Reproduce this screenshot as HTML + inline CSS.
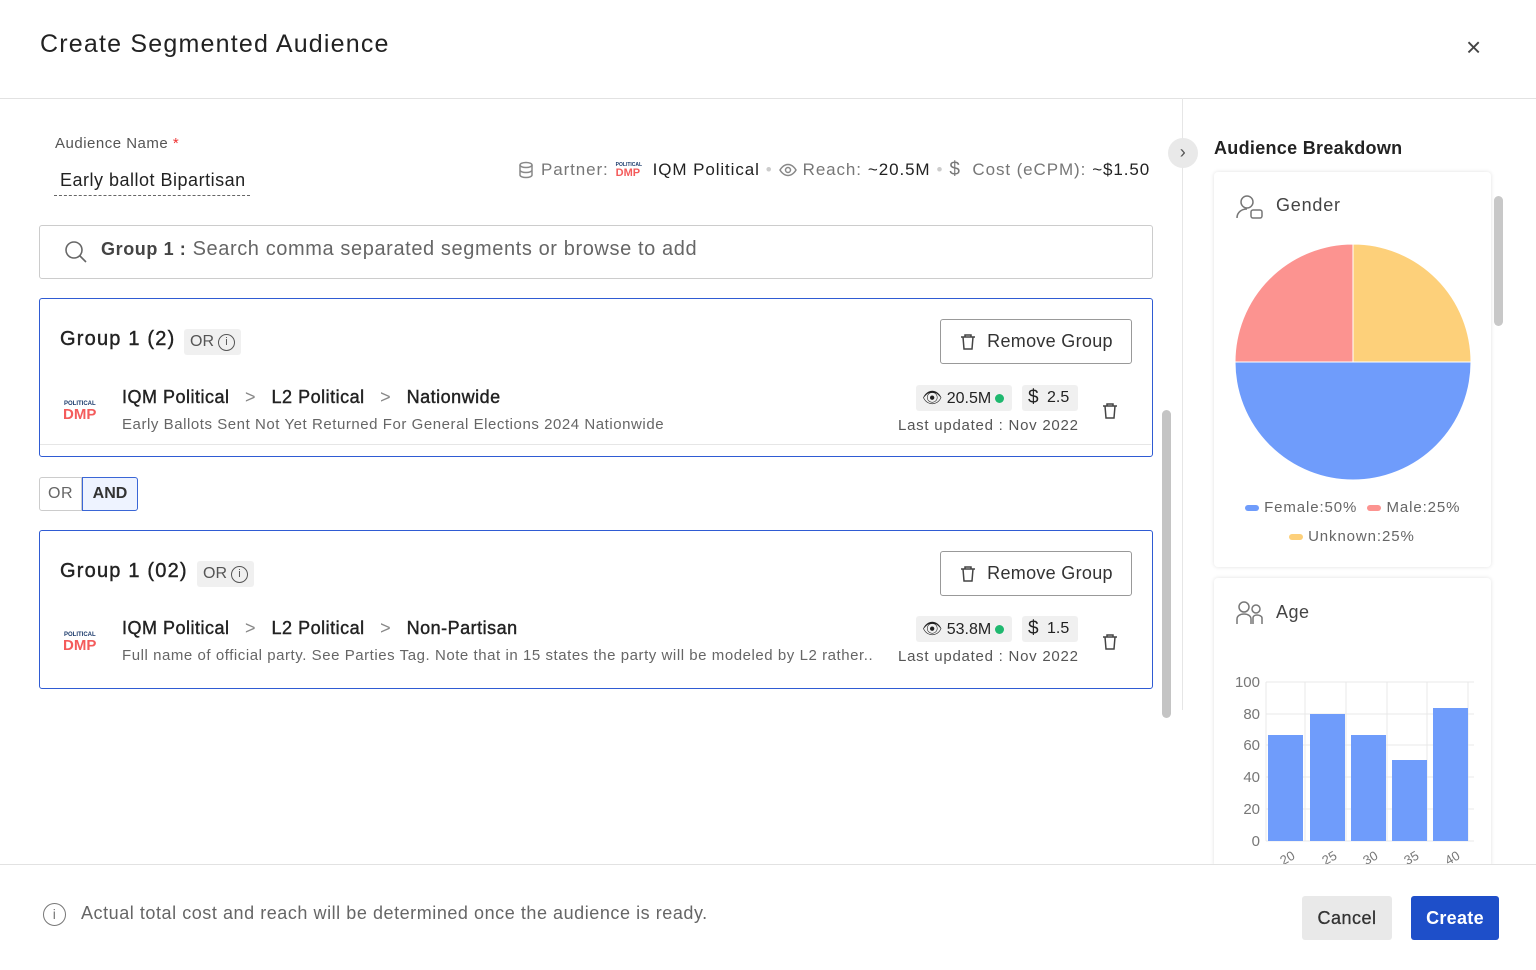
<!DOCTYPE html>
<html><head><meta charset="utf-8"><style>
*{box-sizing:border-box;margin:0;padding:0}
body{width:1536px;height:970px;background:#fff;font-family:"Liberation Sans",sans-serif;color:#222;position:relative;overflow:hidden;letter-spacing:0.5px}
.a{position:absolute;white-space:nowrap}
.grp{position:absolute;left:39px;width:1114px;height:159px;border:1.5px solid #2f5bd3;border-radius:3px;background:#fff}
.rb{position:absolute;left:900px;top:20px;width:192px;height:45px;border:1px solid #999;border-radius:3px;font-size:18px;color:#333;display:flex;align-items:center;justify-content:center;gap:10px;letter-spacing:0.3px}
.dmp{position:absolute;font-weight:bold;line-height:1;letter-spacing:0}
.pill{position:absolute;background:#f0f0f0;border-radius:3px;height:26px;font-size:16px;display:flex;align-items:center;padding:0 6px;gap:4px;letter-spacing:0}
</style></head><body>
<div class="a" style="left:40px;top:30px;font-size:25px;color:#222;letter-spacing:1.2px">Create Segmented Audience</div>
<div class="a" style="left:1466px;top:32px;font-size:26px;color:#444">×</div>
<div class="a" style="left:0;top:98px;width:1536px;height:1px;background:#e2e2e2"></div>
<div class="a" style="left:1182px;top:98px;width:1px;height:612px;background:#e6e6e6"></div>

<div class="a" style="left:55px;top:135px;font-size:15px;color:#555">Audience Name <span style="color:#e33">*</span></div>
<div class="a" style="left:60px;top:170px;font-size:18px;color:#222">Early ballot Bipartisan</div>
<div class="a" style="left:54px;top:195px;width:196px;border-top:1.5px dashed #666"></div>

<div class="a" style="left:517px;top:159px;font-size:17px;color:#777;display:flex;align-items:center;gap:6px;letter-spacing:0.9px">
<svg width="18" height="18" viewBox="0 0 18 18" fill="none" stroke="#888" stroke-width="1.5"><ellipse cx="9" cy="4" rx="6" ry="2.5"/><path d="M3 4v10c0 1.4 2.7 2.5 6 2.5s6-1.1 6-2.5V4M3 9c0 1.4 2.7 2.5 6 2.5s6-1.1 6-2.5"/></svg>
Partner: <span style="display:inline-block;width:32px;position:relative;height:18px"><span class="dmp" style="font-size:5px;color:#1b3a6b;left:1px;top:2px">POLITICAL</span><span class="dmp" style="font-size:11px;color:#f45b5b;left:1px;top:7px">DMP</span></span><span style="color:#222">IQM Political</span> <span style="color:#ccc">•</span>
<svg width="18" height="18" viewBox="0 0 18 18" fill="none" stroke="#888" stroke-width="1.5"><path d="M1 9s3-5.5 8-5.5S17 9 17 9s-3 5.5-8 5.5S1 9 1 9z"/><circle cx="9" cy="9" r="2.5"/></svg>
Reach: <span style="color:#222">~20.5M</span> <span style="color:#ccc">•</span> <span style="font-size:19px">$</span>&nbsp;Cost (eCPM): <span style="color:#222">~$1.50</span></div>

<div class="a" style="left:39px;top:225px;width:1114px;height:54px;border:1px solid #ccc;border-radius:3px"></div>
<svg class="a" style="left:64px;top:240px" width="24" height="24" viewBox="0 0 24 24" fill="none" stroke="#666" stroke-width="1.6"><circle cx="10" cy="10" r="8"/><path d="M16 16l6 6"/></svg>
<div class="a" style="left:101px;top:238px;font-size:20px;color:#666;letter-spacing:0.6px"><b style="color:#444;font-size:18px">Group 1 :</b> Search comma separated segments or browse to add</div>

<div class="grp" style="top:298px">
<div class="a" style="left:20px;top:29px;font-size:20px;color:#222;letter-spacing:1.2px;-webkit-text-stroke:0.4px #222">Group 1 (2)</div>
<div class="pill" style="left:144px;top:30px;color:#555">OR <span style="display:inline-block;width:17px;height:17px;border:1.5px solid #555;border-radius:50%;font-size:11px;text-align:center;line-height:14px">i</span></div>
<div class="rb"><svg width="18" height="18" viewBox="0 0 18 18" fill="none" stroke="#444" stroke-width="1.5"><path d="M2 4h14M6 4V2h6v2M4 4l1 12h8l1-12"/></svg>Remove Group</div>
<span class="dmp" style="font-size:6px;color:#1b3a6b;left:24px;top:102px">POLITICAL</span><span class="dmp" style="font-size:15px;color:#f45b5b;left:23px;top:108px">DMP</span>
<div class="a" style="left:82px;top:88px;font-size:18px;color:#222;letter-spacing:0.5px;-webkit-text-stroke:0.4px #222">IQM Political <span style="color:#888;margin:0 10px;-webkit-text-stroke:0">&gt;</span> L2 Political <span style="color:#888;margin:0 10px;-webkit-text-stroke:0">&gt;</span> Nationwide</div>
<div class="a" style="left:82px;top:117px;font-size:15px;color:#666;letter-spacing:0.55px">Early Ballots Sent Not Yet Returned For General Elections 2024 Nationwide</div>
<div class="pill" style="left:876px;top:86px;width:96px">👁︎ 20.5M <span style="width:9px;height:9px;border-radius:50%;background:#1fb86f;display:inline-block"></span></div>
<div class="pill" style="left:982px;top:86px;width:56px;font-size:16px"><span style="font-size:19px">$</span>&nbsp;2.5</div>
<div class="a" style="left:858px;top:118px;font-size:15px;color:#555;letter-spacing:0.75px">Last updated : Nov 2022</div>
<svg class="a" style="left:1062px;top:103px" width="16" height="18" viewBox="0 0 16 18" fill="none" stroke="#444" stroke-width="1.5"><path d="M1 4h14M5 4V2h6v2M3 4l1 12h8l1-12"/></svg>
<div class="a" style="left:0;top:145px;width:1111px;height:1px;background:#e6e6e6"></div>
</div>

<div class="a" style="left:39px;top:477px;width:43px;height:34px;border:1px solid #ccc;border-radius:3px 0 0 3px;font-size:16px;color:#666;text-align:center;line-height:32px">OR</div>
<div class="a" style="left:82px;top:477px;width:56px;height:34px;border:1.5px solid #3a66d6;border-radius:0 3px 3px 0;background:#eef3ff;font-size:16px;font-weight:bold;color:#333;text-align:center;line-height:31px;letter-spacing:0">AND</div>

<div class="grp" style="top:530px">
<div class="a" style="left:20px;top:29px;font-size:20px;color:#222;letter-spacing:1.2px;-webkit-text-stroke:0.4px #222">Group 1 (02)</div>
<div class="pill" style="left:157px;top:30px;color:#555">OR <span style="display:inline-block;width:17px;height:17px;border:1.5px solid #555;border-radius:50%;font-size:11px;text-align:center;line-height:14px">i</span></div>
<div class="rb"><svg width="18" height="18" viewBox="0 0 18 18" fill="none" stroke="#444" stroke-width="1.5"><path d="M2 4h14M6 4V2h6v2M4 4l1 12h8l1-12"/></svg>Remove Group</div>
<span class="dmp" style="font-size:6px;color:#1b3a6b;left:24px;top:101px">POLITICAL</span><span class="dmp" style="font-size:15px;color:#f45b5b;left:23px;top:107px">DMP</span>
<div class="a" style="left:82px;top:87px;font-size:18px;color:#222;letter-spacing:0.5px;-webkit-text-stroke:0.4px #222">IQM Political <span style="color:#888;margin:0 10px;-webkit-text-stroke:0">&gt;</span> L2 Political <span style="color:#888;margin:0 10px;-webkit-text-stroke:0">&gt;</span> Non-Partisan</div>
<div class="a" style="left:82px;top:116px;font-size:15px;color:#666;letter-spacing:0.55px">Full name of official party. See Parties Tag. Note that in 15 states the party will be modeled by L2 rather..</div>
<div class="pill" style="left:876px;top:85px;width:96px">👁︎ 53.8M <span style="width:9px;height:9px;border-radius:50%;background:#1fb86f;display:inline-block"></span></div>
<div class="pill" style="left:982px;top:85px;width:56px"><span style="font-size:19px">$</span>&nbsp;1.5</div>
<div class="a" style="left:858px;top:117px;font-size:15px;color:#555;letter-spacing:0.75px">Last updated : Nov 2022</div>
<svg class="a" style="left:1062px;top:102px" width="16" height="18" viewBox="0 0 16 18" fill="none" stroke="#444" stroke-width="1.5"><path d="M1 4h14M5 4V2h6v2M3 4l1 12h8l1-12"/></svg>
</div>

<div class="a" style="left:1162px;top:410px;width:9px;height:308px;background:#c4c4c4;border-radius:5px"></div>

<div class="a" style="left:1168px;top:138px;width:30px;height:30px;border-radius:50%;background:#e9e9e9;text-align:center;line-height:28px;color:#555;font-size:18px">›</div>
<div class="a" style="left:1214px;top:138px;font-size:18px;font-weight:bold;color:#222;letter-spacing:0.3px">Audience Breakdown</div>
<div class="a" style="left:1214px;top:172px;width:277px;height:395px;box-shadow:0 0 4px rgba(0,0,0,.12);border-radius:4px"></div>
<div class="a" style="left:1214px;top:578px;width:277px;height:290px;box-shadow:0 0 4px rgba(0,0,0,.12);border-radius:4px"></div>
<div class="a" style="left:1494px;top:196px;width:9px;height:130px;background:#c8c8c8;border-radius:5px"></div>
<svg class="a" style="left:1236px;top:194px" width="28" height="26" viewBox="0 0 28 26" fill="none" stroke="#777" stroke-width="1.5"><circle cx="11" cy="8" r="6"/><path d="M1 24c0-6 5-9 10-9"/><rect x="15" y="16" width="11" height="8" rx="2"/></svg>
<div class="a" style="left:1276px;top:195px;font-size:18px;color:#444;letter-spacing:0.8px">Gender</div>
<svg class="a" style="left:1232px;top:241px" width="242" height="242" viewBox="-121 -121 242 242">
<path d="M0 0V-118A118 118 0 0 0 -118 0Z" fill="#fc9390" stroke="#fff"/>
<path d="M0 0V-118A118 118 0 0 1 118 0Z" fill="#fdd07a" stroke="#fff"/>
<path d="M-118 0A118 118 0 0 0 118 0Z" fill="#6f9cfb" stroke="#fff"/></svg>
<div class="a" style="left:1245px;top:499px;font-size:15px;color:#666;letter-spacing:0.9px"><span style="display:inline-block;width:14px;height:6px;background:#6f9cfb;border-radius:3px;vertical-align:middle"></span> Female:50% &nbsp;<span style="display:inline-block;width:14px;height:6px;background:#fc9390;border-radius:3px;vertical-align:middle"></span> Male:25%</div>
<div class="a" style="left:1289px;top:528px;font-size:15px;color:#666;letter-spacing:0.9px"><span style="display:inline-block;width:14px;height:6px;background:#fdd07a;border-radius:3px;vertical-align:middle"></span> Unknown:25%</div>
<svg class="a" style="left:1236px;top:600px" width="28" height="26" viewBox="0 0 28 26" fill="none" stroke="#777" stroke-width="1.5"><circle cx="8" cy="7" r="5"/><circle cx="20" cy="9" r="4"/><path d="M1 24v-5c0-3 3-5 7-5s7 2 7 5v5M17 24v-6c0-2 2-3 4-3s5 1 5 3v6"/></svg>
<div class="a" style="left:1276px;top:602px;font-size:18px;color:#444">Age</div>
<svg class="a" style="left:1214px;top:670px" width="277" height="195" letter-spacing="0">
<g stroke="#e8e8e8"><path d="M52 12H260M52 44H260M52 75H260M52 107H260M52 139H260M52 171H260M52 12V171M91 12V171M132 12V171M173 12V171M213 12V171M254 12V171"/></g>
<g fill="#6f9cfb"><rect x="54" y="65" width="35" height="106"/><rect x="96" y="44" width="35" height="127"/><rect x="137" y="65" width="35" height="106"/><rect x="178" y="90" width="35" height="81"/><rect x="219" y="38" width="35" height="133"/></g>
<g font-family="Liberation Sans" font-size="15" fill="#777" text-anchor="end"><text x="46" y="17">100</text><text x="46" y="49">80</text><text x="46" y="80">60</text><text x="46" y="112">40</text><text x="46" y="144">20</text><text x="46" y="176">0</text></g>
<g font-family="Liberation Sans" font-size="13" fill="#777"><text x="66" y="193" transform="rotate(-30 72 188)">20</text><text x="108" y="193" transform="rotate(-30 114 188)">25</text><text x="149" y="193" transform="rotate(-30 155 188)">30</text><text x="190" y="193" transform="rotate(-30 196 188)">35</text><text x="231" y="193" transform="rotate(-30 237 188)">40</text></g>
</svg>

<div class="a" style="left:0;top:864px;width:1536px;height:1px;background:#e2e2e2"></div>
<div class="a" style="left:0;top:865px;width:1536px;height:105px;background:#fff"></div>
<div class="a" style="left:43px;top:903px;width:23px;height:23px;border:1.5px solid #777;border-radius:50%;font-size:14px;color:#777;text-align:center;line-height:20px">i</div>
<div class="a" style="left:81px;top:903px;font-size:18px;color:#666;letter-spacing:0.55px">Actual total cost and reach will be determined once the audience is ready.</div>
<div class="a" style="left:1302px;top:896px;width:90px;height:44px;background:#e9e9e9;border-radius:3px;font-size:18px;color:#333;text-align:center;line-height:44px;-webkit-text-stroke:0.3px #333">Cancel</div>
<div class="a" style="left:1411px;top:896px;width:88px;height:44px;background:#1e4fc9;border-radius:3px;font-size:18px;color:#fff;font-weight:bold;text-align:center;line-height:44px;letter-spacing:0.3px">Create</div>
</body></html>
